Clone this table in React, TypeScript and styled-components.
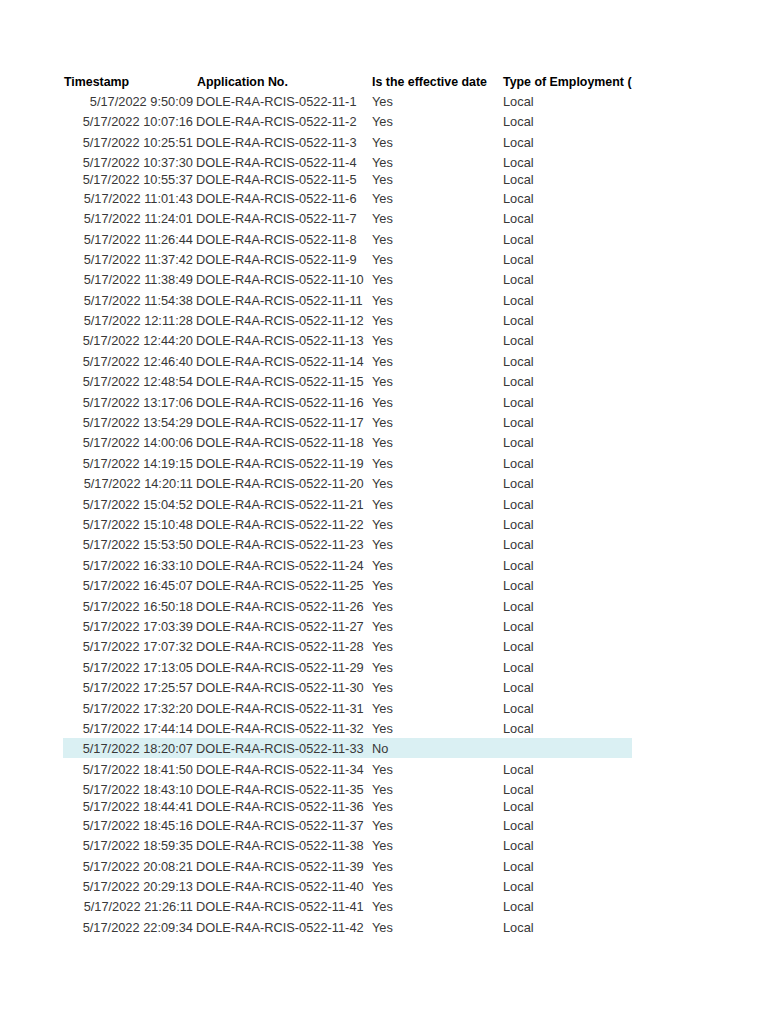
import React from "react"
import styled, { createGlobalStyle } from "styled-components"

const GlobalStyle = createGlobalStyle`
  html, body {
    margin: 0;
    padding: 0;
    background: #ffffff;
  }
`

type Entry = {
  time: string
  effective: string
  employment: string
  short?: boolean
}

const times = [
  "9:50:09", "10:07:16", "10:25:51", "10:37:30", "10:55:37", "11:01:43",
  "11:24:01", "11:26:44", "11:37:42", "11:38:49", "11:54:38", "12:11:28",
  "12:44:20", "12:46:40", "12:48:54", "13:17:06", "13:54:29", "14:00:06",
  "14:19:15", "14:20:11", "15:04:52", "15:10:48", "15:53:50", "16:33:10",
  "16:45:07", "16:50:18", "17:03:39", "17:07:32", "17:13:05", "17:25:57",
  "17:32:20", "17:44:14", "18:20:07", "18:41:50", "18:43:10", "18:44:41",
  "18:45:16", "18:59:35", "20:08:21", "20:29:13", "21:26:11", "22:09:34",
]

const entries: Entry[] = times.map((time, i) => {
  const n = i + 1
  return {
    time,
    effective: n === 33 ? "No" : "Yes",
    employment: n === 33 ? "" : "Local",
    short: n === 5 || n === 36,
  }
})

function App() {
  return (
    <Page>
      <GlobalStyle />
      <Sheet>
        <HeaderRow>
          <HeadCell>Timestamp</HeadCell>
          <HeadCell $indent>Application No.</HeadCell>
          <HeadCell $indent>Is the effective date</HeadCell>
          <HeadCell $indent>Type of Employment (</HeadCell>
        </HeaderRow>
        {entries.map((e, i) => (
          <Row key={e.time} $short={e.short} $marked={e.effective === "No"}>
            <Cell $right>5/17/2022 {e.time}</Cell>
            <Cell>DOLE-R4A-RCIS-0522-11-{i + 1}</Cell>
            <Cell $indent>{e.effective}</Cell>
            <Cell $indent>{e.employment}</Cell>
          </Row>
        ))}
      </Sheet>
    </Page>
  )
}

export default App

const Page = styled.div`
  min-height: 1024px;
  padding: 70px 0 0 63px;
  box-sizing: border-box;
  background: #ffffff;
`

const Sheet = styled.div`
  display: flex;
  flex-direction: column;
  width: 572px;
  overflow: hidden;
  font-family: "Liberation Sans", Arial, sans-serif;
`

const HeaderRow = styled.div`
  display: grid;
  grid-template-columns: 132px 175px 131px 134px;
  height: 20.4px;
  align-items: end;
`

const HeadCell = styled.div<{ $indent?: boolean }>`
  padding: 0 0 0 ${props => (props.$indent ? "2px" : "1px")};
  font-size: 12.4px;
  line-height: 15px;
  font-weight: bold;
  color: #000000;
  white-space: nowrap;
  overflow: hidden;
`

const Row = styled.div<{ $short?: boolean; $marked?: boolean }>`
  display: grid;
  grid-template-columns: 132px 175px 131px 131px;
  width: 569px;
  height: ${props => (props.$short ? "15.4px" : "20.4px")};
  align-items: end;
  background: ${props => (props.$marked ? "#daf0f3" : "transparent")};
`

const Cell = styled.div<{ $right?: boolean; $indent?: boolean }>`
  padding: 0 ${props => (props.$right ? "2px" : "0")} 2px
    ${props => (props.$indent ? "2px" : props.$right ? "0" : "1px")};
  text-align: ${props => (props.$right ? "right" : "left")};
  font-size: 12.8px;
  line-height: 15px;
  color: #383838;
  white-space: nowrap;
`
